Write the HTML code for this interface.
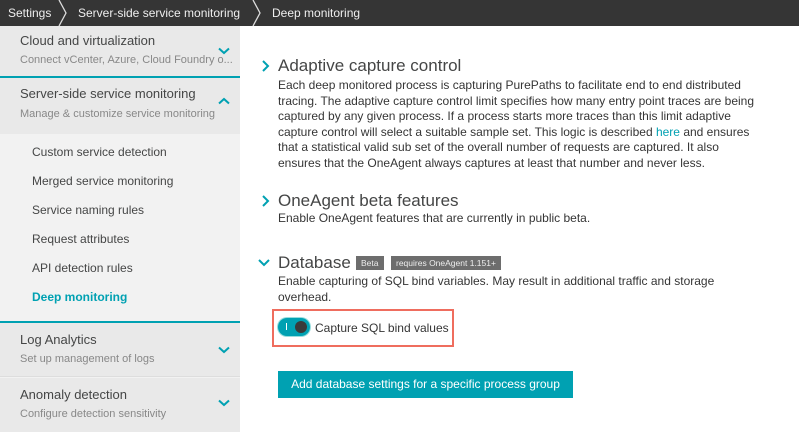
<!DOCTYPE html>
<html><head><meta charset="utf-8"><style>
*{margin:0;padding:0;box-sizing:border-box}
body{width:799px;height:432px;overflow:hidden;background:#fff;font-family:"Liberation Sans",sans-serif;color:#454646;position:relative}
.top{position:absolute;left:0;top:0;width:799px;height:26px;background:#353535;color:#eee;font-size:12px}
.top span{position:absolute;top:6px}
.sb{position:absolute;left:0;top:26px;width:240px;height:406px;background:#f2f2f2}
.sec{position:absolute;left:0;width:240px;background:#e9e9e9}
.sec .t{position:absolute;left:20px;font-size:13px;color:#454646}
.sec .s{position:absolute;left:20px;font-size:11px;color:#888}
.chev{position:absolute;right:10px;width:12px;height:8px}
.item{position:absolute;left:32px;font-size:12px;color:#454646}
.c{position:absolute;left:278px;font-size:12px;line-height:15.6px;color:#353535;white-space:nowrap}
.h{position:absolute;left:278px;font-size:17px;font-weight:300;color:#454646}
.badge{position:absolute;top:256px;height:14px;background:#6d6d6d;color:#eee;font-size:8.5px;line-height:14px;padding:0 5px}
</style></head><body>
<div class="top">
<span style="left:8px">Settings</span>
<svg style="position:absolute;left:58px;top:0" width="10" height="26"><path d="M1 0 L8 13 L1 26" stroke="#ddd" fill="none" stroke-width="1.3"/></svg>
<span style="left:78px">Server-side service monitoring</span>
<svg style="position:absolute;left:252px;top:0" width="10" height="26"><path d="M1 0 L8 13 L1 26" stroke="#ddd" fill="none" stroke-width="1.3"/></svg>
<span style="left:272px">Deep monitoring</span>
</div>
<div class="sb">
<div class="sec" style="top:0;height:50px"><div class="t" style="top:7px">Cloud and virtualization</div><div class="s" style="top:28px">Connect vCenter, Azure, Cloud Foundry o...</div>
<svg class="chev" style="top:21px" viewBox="0 0 12 8"><path d="M1 1.5 L6 6 L11 1.5" stroke="#00a1b2" stroke-width="2" fill="none"/></svg></div>
<div style="position:absolute;top:50px;left:0;width:240px;height:2px;background:#00a1b2"></div>
<div class="sec" style="top:52px;height:56px"><div class="t" style="top:8px">Server-side service monitoring</div><div class="s" style="top:30px">Manage &amp; customize service monitoring</div>
<svg class="chev" style="top:19px" viewBox="0 0 12 8"><path d="M1 6.5 L6 2 L11 6.5" stroke="#00a1b2" stroke-width="2" fill="none"/></svg></div>
<div class="item" style="top:119px">Custom service detection</div>
<div class="item" style="top:148px">Merged service monitoring</div>
<div class="item" style="top:177px">Service naming rules</div>
<div class="item" style="top:206px">Request attributes</div>
<div class="item" style="top:235px">API detection rules</div>
<div class="item" style="top:264px;color:#00a1b2;font-weight:bold">Deep monitoring</div>
<div style="position:absolute;top:295px;left:0;width:240px;height:2px;background:#00a1b2"></div>
<div class="sec" style="top:297px;height:54px;border-bottom:1px solid #ddd"><div class="t" style="top:9px">Log Analytics</div><div class="s" style="top:30px">Set up management of logs</div>
<svg class="chev" style="top:23px" viewBox="0 0 12 8"><path d="M1 1.5 L6 6 L11 1.5" stroke="#00a1b2" stroke-width="2" fill="none"/></svg></div>
<div class="sec" style="top:352px;height:54px"><div class="t" style="top:9px">Anomaly detection</div><div class="s" style="top:30px">Configure detection sensitivity</div>
<svg class="chev" style="top:21px" viewBox="0 0 12 8"><path d="M1 1.5 L6 6 L11 1.5" stroke="#00a1b2" stroke-width="2" fill="none"/></svg></div>
</div>

<svg style="position:absolute;left:261px;top:60px" width="9" height="12"><path d="M2 1 L7 6 L2 11" stroke="#00a1b2" stroke-width="2" fill="none"/></svg>
<div class="h" style="top:56px">Adaptive capture control</div>
<div class="c" style="top:78px">Each deep monitored process is capturing PurePaths to facilitate end to end distributed<br>tracing. The adaptive capture control limit specifies how many entry point traces are being<br>captured by any given process. If a process starts more traces than this limit adaptive<br>capture control will select a suitable sample set. This logic is described <span style="color:#00a1b2">here</span> and ensures<br>that a statistical valid sub set of the overall number of requests are captured. It also<br>ensures that the OneAgent always captures at least that number and never less.</div>

<svg style="position:absolute;left:261px;top:195px" width="9" height="12"><path d="M2 1 L7 6 L2 11" stroke="#00a1b2" stroke-width="2" fill="none"/></svg>
<div class="h" style="top:191px">OneAgent beta features</div>
<div class="c" style="top:211px">Enable OneAgent features that are currently in public beta.</div>

<svg style="position:absolute;left:258px;top:258px" width="12" height="9"><path d="M1 2 L6 7 L11 2" stroke="#00a1b2" stroke-width="2" fill="none"/></svg>
<div class="h" style="top:253px">Database</div>
<div class="badge" style="left:356px">Beta</div>
<div class="badge" style="left:391px">requires OneAgent 1.151+</div>
<div class="c" style="top:274px">Enable capturing of SQL bind variables. May result in additional traffic and storage<br>overhead.</div>

<div style="position:absolute;left:272px;top:309px;width:182px;height:38px;border:2px solid #ef6d5e;background:#fff"></div>
<div style="position:absolute;left:278px;top:318px;width:32px;height:18px;border-radius:9px;background:#00a1b2;box-shadow:0 0 0 1px #9dd"></div>
<div style="position:absolute;left:286px;top:323px;width:1px;height:7px;background:#fff"></div>
<div style="position:absolute;left:295px;top:321px;width:12px;height:12px;border-radius:6px;background:#3a3a3a"></div>
<div style="position:absolute;left:315px;top:321px;font-size:12px;color:#353535">Capture SQL bind values</div>

<div style="position:absolute;left:278px;top:371px;width:295px;height:27px;background:#00a1b2;color:#fff;font-size:12px;line-height:27px;text-align:center">Add database settings for a specific process group</div>
</body></html>
